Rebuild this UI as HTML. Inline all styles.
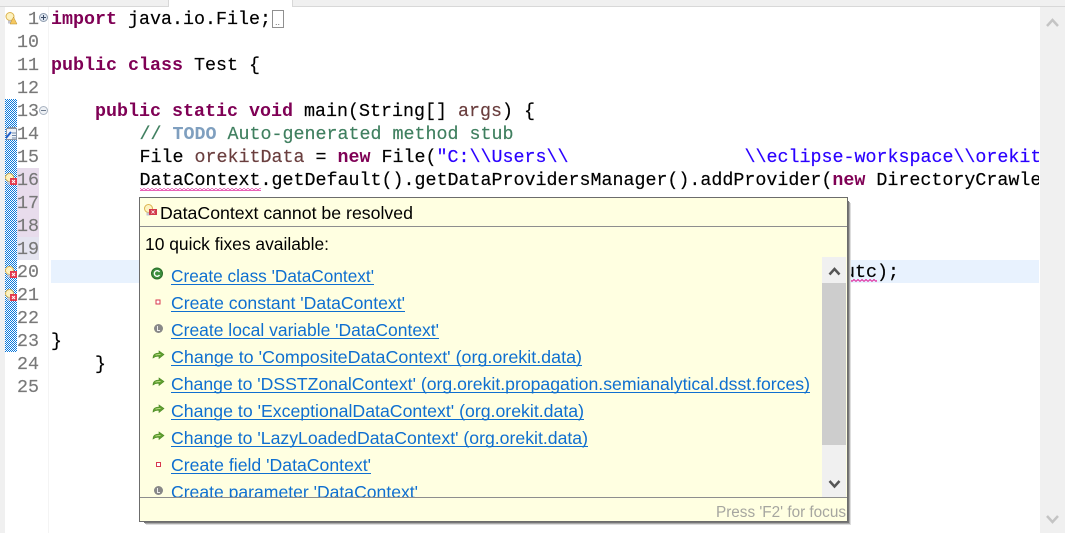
<!DOCTYPE html>
<html><head><meta charset="utf-8"><title>Test.java</title>
<style>
html,body{margin:0;padding:0;background:#fff;overflow:hidden}
svg{display:block}
.c{font-family:"Liberation Mono",monospace;font-size:18.33px;fill:#000;stroke:#000;stroke-width:.18px;white-space:pre}
.k{fill:#7f0055;stroke:none;font-weight:bold}
.v{fill:#6a3e3e;stroke:#6a3e3e}
.s{fill:#2a00ff;stroke:#2a00ff}
.g{fill:#3f7f5f;stroke:#3f7f5f}
.t{fill:#7f9fbf;stroke:none;font-weight:bold}
.n{font-family:"Liberation Mono",monospace;font-size:18.33px;fill:#787878;stroke:#787878;stroke-width:.15px}
.p{font-family:"Liberation Sans",sans-serif;font-size:17.5px;fill:#000}
.l{font-family:"Liberation Sans",sans-serif;font-size:17.5px;fill:#0f6fd0}
</style></head><body>
<svg xmlns="http://www.w3.org/2000/svg" width="1065" height="533" viewBox="0 0 1065 533" xml:space="preserve">
<defs>
<pattern id="ck" width="2" height="2" patternUnits="userSpaceOnUse"><rect width="2" height="2" fill="#fff"/><rect width="1" height="1" fill="#0a78dc"/><rect x="1" y="1" width="1" height="1" fill="#0a78dc"/></pattern>
<pattern id="sq" width="4" height="3" patternUnits="userSpaceOnUse"><path d="M0 2.5L2 .5L4 2.5" fill="none" stroke="#e0209a" stroke-width="1"/></pattern>
<clipPath id="code"><rect x="51" y="7" width="988" height="526"/></clipPath>
<clipPath id="list"><rect x="140" y="257" width="682" height="240"/></clipPath>
<g id="bulb"><circle cx="4.5" cy="4.5" r="4" fill="#fdf2c0" stroke="#dcb450"/><rect x="2.5" y="8.5" width="4" height="3" fill="#c4c4d0"/></g>
<g id="err"><use href="#bulb"/><rect x="5" y="5" width="7" height="7" fill="#e23a4e"/><path d="M7 7l3 3M10 7l-3 3" stroke="#fff" stroke-width="1"/></g>
<g id="ar"><path d="M0 7C0 3 3 2 6 2V0L11 3.500L6 7.500V5.500C4 5 2 5.500 0 7Z" fill="#5f9e30" stroke="#4a8a24" stroke-width=".6"/><path d="M2.500 4.200C4 3.400 6 3.400 7.500 3.500" fill="none" stroke="#b8dc80" stroke-width="1"/></g>
</defs>

<rect width="1065" height="533" fill="#fff"/>
<rect width="1065" height="6" fill="#f0f0f0"/>
<rect y="6" width="1065" height="1" fill="#d8d8d8"/>
<rect x="169" y="0" width="123" height="7" fill="#fff"/>
<rect x="168" y="0" width="1" height="7" fill="#d8d8d8"/>
<rect x="292" y="0" width="1" height="7" fill="#d8d8d8"/>
<rect x="0" y="7" width="5" height="526" fill="#f0f0f0"/>
<rect x="48" y="7" width="1" height="526" fill="#f4f4f4"/>
<rect x="5" y="99" width="12" height="253" fill="url(#ck)" shape-rendering="crispEdges"/>
<rect x="17" y="168" width="22" height="69" fill="#e8dcec"/>
<rect x="17" y="237" width="22" height="23" fill="#e4e4f0"/>
<rect x="51" y="260" width="988" height="23" fill="#e8f2fe"/>
<rect x="1040" y="7" width="25" height="526" fill="#f0f0f0"/>
<path d="M1047 26L1052.500 20L1058 26" fill="none" stroke="#c4c4c4" stroke-width="2.500"/>
<path d="M1047 516L1052.500 522L1058 516" fill="none" stroke="#c4c4c4" stroke-width="2.500"/>

<g class="n">
<text x="28" y="24">1</text><text x="17" y="47">10</text><text x="17" y="70">11</text><text x="17" y="93">12</text><text x="17" y="116">13</text><text x="17" y="139">14</text><text x="17" y="162">15</text><text x="17" y="185">16</text><text x="17" y="208">17</text><text x="17" y="231">18</text><text x="17" y="254">19</text><text x="17" y="277">20</text><text x="17" y="300">21</text><text x="17" y="323">22</text><text x="17" y="346">23</text><text x="17" y="369">24</text><text x="17" y="392">25</text>
</g>

<circle cx="43.500" cy="17.500" r="4" fill="#dfe6f0" stroke="#8e9cae"/><path d="M41 17.500h5M43.500 15v5" stroke="#3c4c66" stroke-width="1"/>
<circle cx="43.500" cy="110.500" r="4" fill="#eef1f5" stroke="#a8b2c0"/><path d="M41 110.500h5" stroke="#6c7a8c" stroke-width="1"/>

<use href="#bulb" x="5.500" y="12"/><path d="M10 24L13.500 17L17 24Z" fill="#f6c860" stroke="#b89030" stroke-width=".5"/>
<rect x="8" y="127" width="8" height="2" fill="#8a94a0"/><rect x="6.500" y="128.500" width="10" height="11" fill="#eef2f8" stroke="#8a94a4"/><path d="M6 138L11 132" stroke="#1c5cc8" stroke-width="2"/><path d="M12 133h4M12 135.500h4M12 138h4" stroke="#7088a8"/>
<use href="#err" x="5" y="173"/><use href="#err" x="5" y="266"/><use href="#err" x="5" y="289"/>

<g clip-path="url(#code)">
<text class="c" y="24" x="51"><tspan class="k">import</tspan> java.io.File;</text>
<rect x="272.500" y="10.500" width="11" height="17" fill="#fff" stroke="#909090"/>
<text x="275" y="25" font-family="Liberation Sans" font-size="9" fill="#666">..</text>
<text class="c" y="70" x="51"><tspan class="k">public</tspan> <tspan class="k">class</tspan> Test {</text>
<text class="c" y="116" x="95"><tspan class="k">public</tspan> <tspan class="k">static</tspan> <tspan class="k">void</tspan> main(String[] <tspan class="v">args</tspan>) {</text>
<text class="c" y="139" x="139.500"><tspan class="g">// </tspan><tspan class="t">TODO</tspan><tspan class="g"> Auto-generated method stub</tspan></text>
<text class="c" y="162" x="139.500">File <tspan class="v">orekitData</tspan> = <tspan class="k">new</tspan> File(<tspan class="s">"C:\\Users\\                \\eclipse-workspace\\orekit-data"</tspan></text>
<text class="c" y="185" x="139.500">DataContext.getDefault().getDataProvidersManager().addProvider(<tspan class="k">new</tspan> DirectoryCrawler</text>
<rect x="140" y="188" width="121" height="3" fill="url(#sq)"/>
<text class="c" y="277" x="844">utc);</text>
<rect x="848" y="279" width="29" height="3" fill="url(#sq)"/>
<text class="c" y="346" x="51">}</text>
<text class="c" y="369" x="95">}</text>
</g>

<!-- popup shadow -->
<rect x="848" y="201" width="1" height="324" fill="#777"/>
<rect x="849" y="202" width="1" height="323" fill="#aaa"/>
<rect x="850" y="203" width="1" height="322" fill="#ddd"/>
<rect x="144" y="522" width="705" height="1" fill="#777"/>
<rect x="145" y="523" width="705" height="1" fill="#aaa"/>
<rect x="146" y="524" width="705" height="1" fill="#ddd"/>

<rect x="139.500" y="197.500" width="708" height="324" fill="#ffffe1" stroke="#6c6c6c"/>
<rect x="140" y="226" width="707" height="1" fill="#8e8e8e"/>
<rect x="140" y="497" width="707" height="1" fill="#8e8e8e"/>

<use href="#bulb" x="144" y="204"/>
<rect x="149" y="209" width="8" height="6" fill="#d23a4a"/><path d="M151.500 210.500l3 3M154.500 210.500l-3 3" stroke="#fff" stroke-width=".8"/>
<text class="p" x="160" y="219" textLength="253" lengthAdjust="spacingAndGlyphs">DataContext cannot be resolved</text>
<text class="p" x="145" y="250" textLength="184" lengthAdjust="spacingAndGlyphs">10 quick fixes available:</text>

<rect x="822" y="257" width="24" height="240" fill="#f0f0f0"/>
<rect x="822" y="283" width="24" height="162" fill="#cdcdcd"/>
<path d="M829.500 274.500L834.500 269L839.500 274.500" fill="none" stroke="#555" stroke-width="2.500"/>
<path d="M829.500 481L834.500 486.500L839.500 481" fill="none" stroke="#555" stroke-width="2.500"/>

<g clip-path="url(#list)">
<text class="l" x="171" y="282" textLength="203" lengthAdjust="spacingAndGlyphs">Create class 'DataContext'</text><rect x="171" y="284" width="203" height="1" fill="#0f6fd0"/>
<text class="l" x="171" y="309" textLength="234" lengthAdjust="spacingAndGlyphs">Create constant 'DataContext'</text><rect x="171" y="311" width="234" height="1" fill="#0f6fd0"/>
<text class="l" x="171" y="336" textLength="268" lengthAdjust="spacingAndGlyphs">Create local variable 'DataContext'</text><rect x="171" y="338" width="268" height="1" fill="#0f6fd0"/>
<text class="l" x="171" y="363" textLength="411" lengthAdjust="spacingAndGlyphs">Change to 'CompositeDataContext' (org.orekit.data)</text><rect x="171" y="365" width="411" height="1" fill="#0f6fd0"/>
<text class="l" x="171" y="390" textLength="639" lengthAdjust="spacingAndGlyphs">Change to 'DSSTZonalContext' (org.orekit.propagation.semianalytical.dsst.forces)</text><rect x="171" y="392" width="639" height="1" fill="#0f6fd0"/>
<text class="l" x="171" y="417" textLength="413" lengthAdjust="spacingAndGlyphs">Change to 'ExceptionalDataContext' (org.orekit.data)</text><rect x="171" y="419" width="413" height="1" fill="#0f6fd0"/>
<text class="l" x="171" y="444" textLength="417" lengthAdjust="spacingAndGlyphs">Change to 'LazyLoadedDataContext' (org.orekit.data)</text><rect x="171" y="446" width="417" height="1" fill="#0f6fd0"/>
<text class="l" x="171" y="471" textLength="200" lengthAdjust="spacingAndGlyphs">Create field 'DataContext'</text><rect x="171" y="473" width="200" height="1" fill="#0f6fd0"/>
<text class="l" x="171" y="498" textLength="247" lengthAdjust="spacingAndGlyphs">Create parameter 'DataContext'</text>
</g>

<circle cx="157" cy="273.500" r="5.500" fill="#3d8f3d" stroke="#2a6e2a"/><path d="M159.500 272a2.800 2.800 0 1 0 0 3" fill="none" stroke="#fff" stroke-width="1.400"/>
<rect x="156" y="300" width="4" height="4" fill="#fff" stroke="#d8394e"/>
<circle cx="158.500" cy="328.500" r="4.500" fill="#888"/><path d="M157.500 326v4.500h2.500" fill="none" stroke="#eee"/>
<use href="#ar" x="153" y="351"/><use href="#ar" x="153" y="378"/><use href="#ar" x="153" y="405"/><use href="#ar" x="153" y="432"/>
<rect x="156.500" y="462.500" width="4" height="4" fill="#fff" stroke="#d8394e"/>
<circle cx="158.500" cy="490.500" r="4.500" fill="#888"/><path d="M157.500 488v4.500h2.500" fill="none" stroke="#eee"/>

<text x="716" y="517" font-family="Liberation Sans" font-size="15.500" fill="#a6a6a0" textLength="130" lengthAdjust="spacingAndGlyphs">Press 'F2' for focus</text>
</svg>
</body></html>
